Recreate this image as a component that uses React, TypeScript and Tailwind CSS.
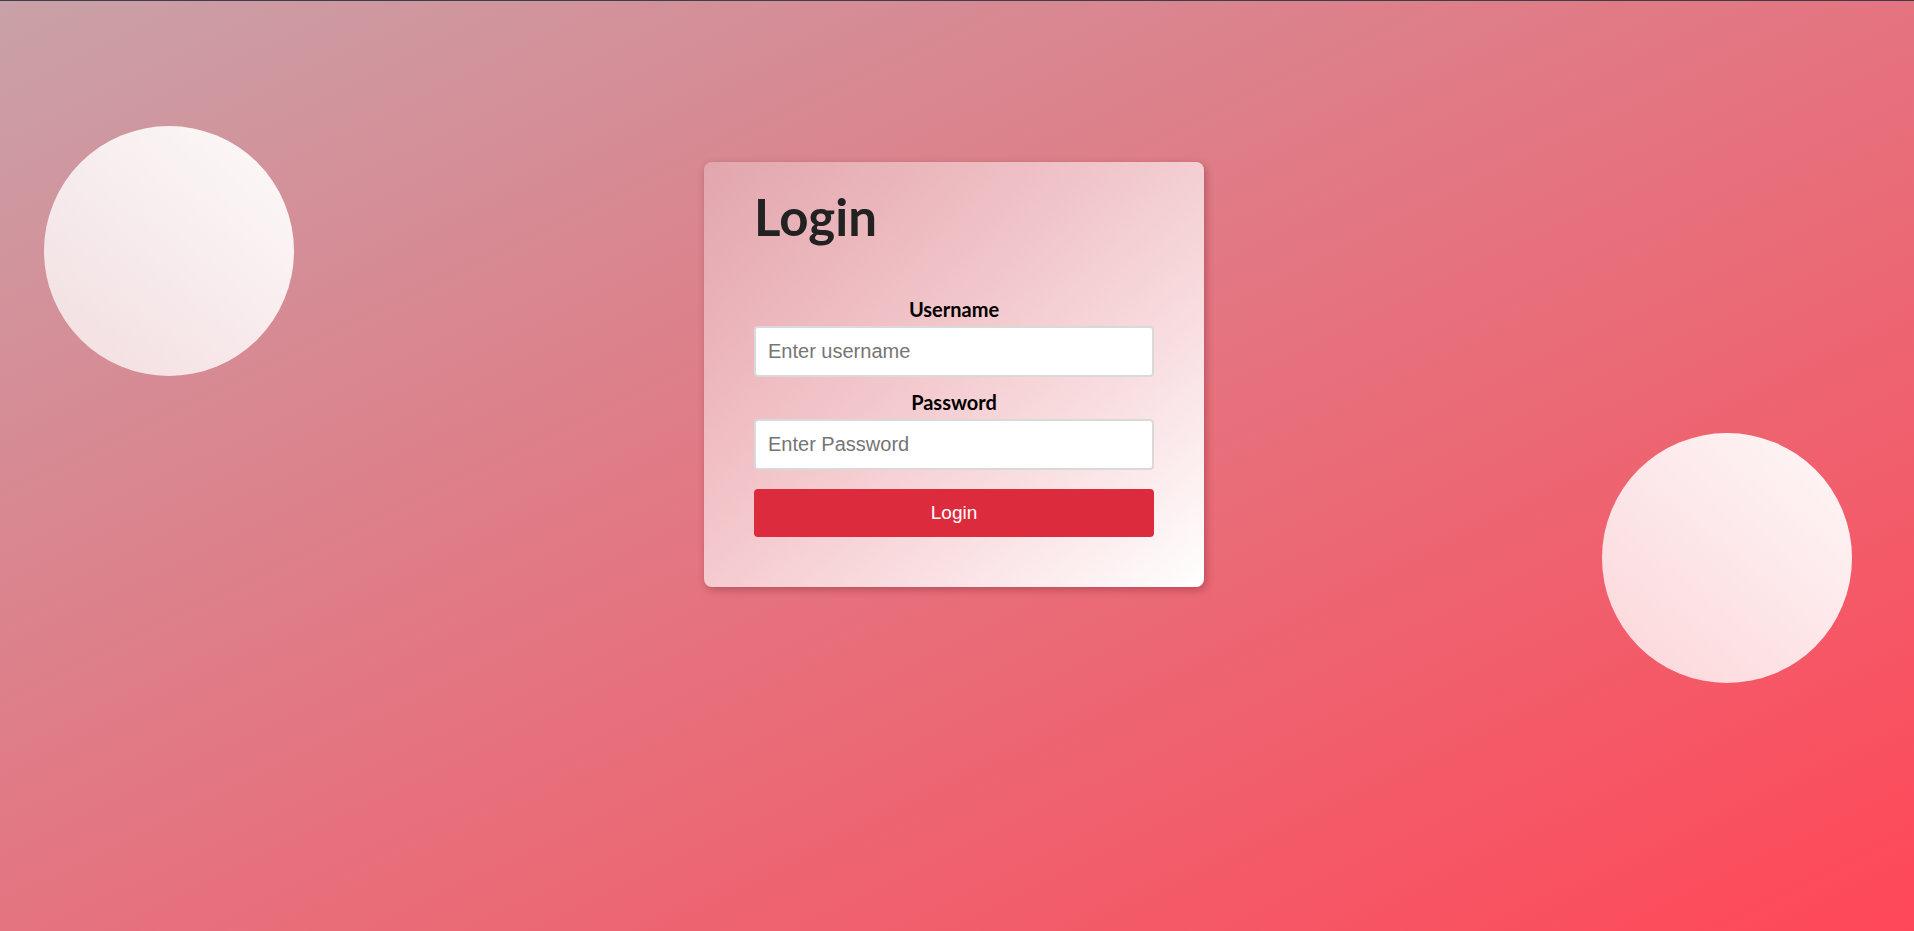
import React from "react";

const lato = "font-['Lato','Noto_Sans',sans-serif]";
const arial = "font-['Liberation_Sans','Arial',sans-serif]";

function Field({
  label,
  type,
  placeholder,
}: {
  label: string;
  type: string;
  placeholder: string;
}) {
  return (
    <div className="flex flex-col">
      <label
        className={`${lato} mb-[5px] text-center text-[20px] leading-[24px] font-bold text-black`}
      >
        {label}
      </label>
      <input
        type={type}
        placeholder={placeholder}
        className={`${arial} h-[51px] w-full rounded-[4px] border-2 border-[#d9d9d9] bg-white px-3 text-[20px] text-[#222] placeholder:text-[#757575] focus:outline-none`}
      />
    </div>
  );
}

export default function App() {
  return (
    <div className="relative min-h-screen overflow-hidden bg-[linear-gradient(to_bottom_right,#c9a1a8,#ff4757)]">
      <div className="h-px w-full bg-[#3c3f47]" />

      {/* decorative circles */}
      <div className="absolute top-[126px] left-[44px] h-[250px] w-[250px] rounded-full bg-linear-to-tr from-white/70 to-white/95" />
      <div className="absolute top-[433px] left-[1602px] h-[250px] w-[250px] rounded-full bg-linear-to-tr from-white/75 to-white/95" />

      <div className="relative flex justify-center pt-[161px] pr-[6px]">
        <div className="w-[500px] rounded-lg bg-linear-to-br from-white/25 to-white px-[50px] pt-[23px] pb-[50px] shadow-[2px_3px_8px_rgba(90,0,20,0.3)]">
          <h1
            className={`${lato} text-[51px] leading-[64px] font-bold text-[#222]`}
          >
            Login
          </h1>

          <form className="mt-[48px] flex flex-col gap-[13px]">
            <Field label="Username" type="text" placeholder="Enter username" />
            <Field label="Password" type="password" placeholder="Enter Password" />
            <button
              type="button"
              className={`${arial} mt-[6px] h-[48px] w-full rounded-[4px] bg-[#dc2b3c] text-[19px] text-white`}
            >
              Login
            </button>
          </form>
        </div>
      </div>
    </div>
  );
}
